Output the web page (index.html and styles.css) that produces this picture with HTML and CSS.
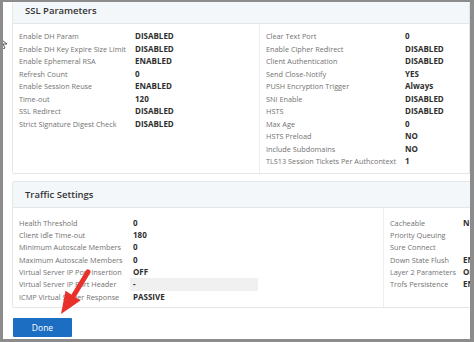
FILE: index.html
```html
<!DOCTYPE html>
<html lang="en">
<head>
    <meta charset="UTF-8">
    <title>SSL Parameters</title>
    <link rel="stylesheet" href="styles.css">
</head>
<body>
    <div class="window">
        <!-- SSL Parameters -->
        <div class="panel ssl-panel">
            <div class="panel-header">SSL Parameters</div>
            <div class="panel-body">
                <div class="col col-left">
                    <div class="kv ssl-left">
                        <span>Enable DH Param</span><b>DISABLED</b>
                        <span>Enable DH Key Expire Size Limit</span><b>DISABLED</b>
                        <span>Enable Ephemeral RSA</span><b>ENABLED</b>
                        <span>Refresh Count</span><b>0</b>
                        <span>Enable Session Reuse</span><b>ENABLED</b>
                        <span>Time-out</span><b>120</b>
                        <span>SSL Redirect</span><b>DISABLED</b>
                        <span>Strict Signature Digest Check</span><b>DISABLED</b>
                    </div>
                </div>
                <div class="col col-right">
                    <div class="kv ssl-right">
                        <span>Clear Text Port</span><b>0</b>
                        <span>Enable Cipher Redirect</span><b>DISABLED</b>
                        <span>Client Authentication</span><b>DISABLED</b>
                        <span>Send Close-Notify</span><b>YES</b>
                        <span>PUSH Encryption Trigger</span><b>Always</b>
                        <span>SNI Enable</span><b>DISABLED</b>
                        <span>HSTS</span><b>DISABLED</b>
                        <span>Max Age</span><b>0</b>
                        <span>HSTS Preload</span><b>NO</b>
                        <span>Include Subdomains</span><b>NO</b>
                        <span>TLS13 Session Tickets Per Authcontext</span><b>1</b>
                    </div>
                </div>
            </div>
        </div>

        <!-- Traffic Settings -->
        <div class="panel traffic-panel">
            <div class="panel-header">Traffic Settings</div>
            <div class="panel-body">
                <div class="col col-left traffic-main">
                    <div class="kv traffic-left">
                        <span>Health Threshold</span><b>0</b>
                        <span>Client Idle Time-out</span><b>180</b>
                        <span>Minimum Autoscale Members</span><b>0</b>
                        <span>Maximum Autoscale Members</span><b>0</b>
                        <span>Virtual Server IP Port Insertion</span><b>OFF</b>
                        <span>Virtual Server IP Port Header</span><b class="field">-</b>
                        <span>ICMP Virtual Server Response</span><b>PASSIVE</b>
                    </div>
                </div>
                <div class="col col-right traffic-side">
                    <div class="kv traffic-right">
                        <span>Cacheable</span><b>NO</b>
                        <span>Priority Queuing</span><b></b>
                        <span>Sure Connect</span><b></b>
                        <span>Down State Flush</span><b>ENABLED</b>
                        <span>Layer 2 Parameters</span><b>OFF</b>
                        <span>Trofs Persistence</span><b>ENABLED</b>
                    </div>
                </div>
            </div>
        </div>

        <div class="actions">
            <button class="btn-primary">Done</button>
        </div>

        <!-- annotation arrow -->
        <svg class="arrow" width="40" height="52" viewBox="0 0 40 52">
            <path d="M35 5 L21 28" stroke="#e8312a" stroke-width="5" stroke-linecap="round" fill="none"/>
            <path d="M8 47 L12.5 23.7 L27.5 33.5 Z" fill="#e8312a"/>
        </svg>

        <!-- mouse cursor -->
        <svg class="cursor" width="10" height="14" viewBox="0 0 10 14">
            <path d="M-3 1 L7 9 L3 9 L5 13 L3 14 L1 10 L-2 12 Z" fill="#fff" stroke="#333" stroke-width="0.8"/>
        </svg>
    </div>
</body>
</html>
```

FILE: styles.css
```css
body {
    margin: 0;
    background-color: #8c8c8c;
    font-family: "Open Sans", Arial, sans-serif;
}
.window {
    position: relative;
    width: 467px;
    height: 337px;
    margin: 2px 0 0 3px;
    background-color: #fff;
    overflow: hidden;
    padding-left: 9px;
    box-sizing: border-box;
}
.panel {
    width: 470px;
    border: 1px solid #e4e6e8;
    border-radius: 2px;
    background: #fff;
}
.ssl-panel {
    border-top: none;
    width: 456px;
}
.panel-header {
    background-color: #f4f7f9;
    border-bottom: 1px solid #e4e6e8;
    color: #333;
    font-weight: 600;
    font-size: 9.5px;
    padding-left: 12px;
}
.ssl-panel .panel-header {
    height: 21px;
    line-height: 18px;
}
.traffic-panel {
    margin-top: 7px;
}
.traffic-panel .panel-header {
    height: 25px;
    line-height: 25px;
}
.panel-body {
    display: flex;
}
.col {
    padding: 6px 0 5px 6px;
}
.col-left {
    width: 240px;
    flex-shrink: 0;
}
.col-right {
    border-left: 1px solid #eceef0;
    flex: 1;
    min-width: 0;
}
.kv {
    display: grid;
    font-size: 7.3px;
    line-height: 12.5px;
}
.kv span {
    color: #727272;
    white-space: nowrap;
}
.kv b {
    color: #2e2e2e;
    font-weight: 700;
    font-size: 8px;
    white-space: nowrap;
}
.ssl-left {
    grid-template-columns: 116px 1fr;
}
.ssl-right {
    grid-template-columns: 139px 1fr;
}
.traffic-main {
    width: 364px;
    padding: 9px 0 4px 6px;
}
.traffic-left {
    grid-template-columns: 114px 125px;
    line-height: 12.35px;
}
.traffic-side {
    padding-top: 9px;
}
.traffic-right {
    grid-template-columns: 73px 1fr;
    line-height: 12.35px;
}
.field {
    background-color: #f0f0f0;
    margin-left: -3px;
    padding-left: 3px;
}
.actions {
    padding: 6px 0 0 1px;
}
.btn-primary {
    width: 59px;
    height: 19px;
    background-color: #1b6ec2;
    border: none;
    border-radius: 1px;
    color: #fff;
    font-family: "Open Sans", Arial, sans-serif;
    font-size: 8.5px;
    padding: 0;
}
.arrow {
    position: absolute;
    left: 50px;
    top: 265px;
}
.cursor {
    position: absolute;
    left: -3px;
    top: 33px;
}
```
